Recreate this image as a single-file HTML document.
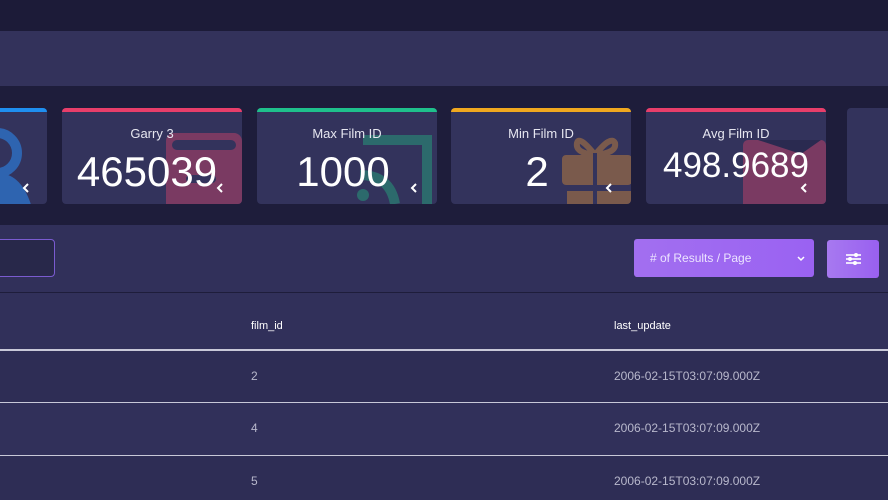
<!DOCTYPE html>
<html><head><style>
*{margin:0;padding:0;box-sizing:border-box}
body{width:888px;height:500px;overflow:hidden;background:#31305a;font-family:"Liberation Sans",sans-serif;position:relative;color:#fff}
.abs{position:absolute}
.card{position:absolute;top:108px;width:180px;height:96px;background:#33335c;border-radius:4px;overflow:hidden}
.card .bar{position:absolute;left:0;top:0;right:0;height:4px}
.card .t{position:absolute;left:0;right:0;top:18px;text-align:center;font-size:13px;color:#e6e6f0}
.card .v{position:absolute;left:0;right:0;top:40px;text-align:center;font-size:42px;color:#fff}
.card svg.ch{position:absolute;top:74px}
.cell{position:absolute;font-size:12px;color:#b8b8cc}
</style></head><body>
<div class="abs" style="left:0;top:0;width:888px;height:31px;background:#1c1b38"></div>
<div class="abs" style="left:0;top:31px;width:888px;height:55px;background:#33325b"></div>
<div class="abs" style="left:0;top:86px;width:888px;height:139px;background:#1e1d3b"></div>

<div class="card" style="left:-133px"><div class="bar" style="background:#1f8ff0"></div>
<svg class="abs" style="left:100px;top:20px" width="80" height="80"><circle cx="30" cy="25" r="20" fill="none" stroke="#2e64b0" stroke-width="10"/><path d="M0 80 Q10 45 30 45 Q55 45 65 80Z" fill="#2e64b0"/></svg>
<svg class="ch" style="left:155px" width="8" height="12"><path d="M6 2 L2 6 L6 10" fill="none" stroke="#fff" stroke-width="2"/></svg></div>

<div class="card" style="left:62px"><div class="bar" style="background:#e83e6a"></div>
<svg class="abs" style="left:104px;top:25px" width="76" height="71"><rect x="0" y="0" width="76" height="80" rx="8" fill="#7a3a62"/><rect x="6" y="7" width="64" height="10" rx="5" fill="#33335c"/><rect x="20" y="42" width="30" height="8" rx="4" fill="#33335c"/></svg>
<div class="t">Garry 3</div><div class="v" style="left:-10px">465039</div>
<svg class="ch" style="left:154px" width="8" height="12"><path d="M6 2 L2 6 L6 10" fill="none" stroke="#fff" stroke-width="2"/></svg></div>

<div class="card" style="left:257px"><div class="bar" style="background:#1fc08c"></div>
<svg class="abs" style="left:98px;top:27px" width="82" height="69"><path d="M8 5 H72 V69" fill="none" stroke="#2c6a6c" stroke-width="10"/><path d="M5 40 Q35 40 40 69" fill="none" stroke="#2c6a6c" stroke-width="10"/><circle cx="8" cy="60" r="6" fill="#2c6a6c"/></svg>
<div class="t">Max Film ID</div><div class="v" style="left:-8px">1000</div>
<svg class="ch" style="left:153px" width="8" height="12"><path d="M6 2 L2 6 L6 10" fill="none" stroke="#fff" stroke-width="2"/></svg></div>

<div class="card" style="left:451px"><div class="bar" style="background:#f0a81f"></div>
<svg class="abs" style="left:108px;top:27px" width="72" height="69"><rect x="3" y="20" width="70" height="30" rx="4" fill="#7a5a4c"/><rect x="8" y="56" width="66" height="20" fill="#7a5a4c"/><path d="M36 20 Q20 0 18 8 Q16 18 36 20 Q52 0 56 8 Q58 18 36 20" fill="none" stroke="#7a5a4c" stroke-width="6"/><rect x="34" y="18" width="4" height="60" fill="#33335c"/></svg>
<div class="t">Min Film ID</div><div class="v" style="left:-8px">2</div>
<svg class="ch" style="left:154px" width="8" height="12"><path d="M6 2 L2 6 L6 10" fill="none" stroke="#fff" stroke-width="2"/></svg></div>

<div class="card" style="left:646px"><div class="bar" style="background:#e83e6a"></div>
<svg class="abs" style="left:97px;top:32px" width="83" height="64"><rect x="0" y="0" width="83" height="70" rx="5" fill="#7a3a62"/><path d="M15 0 L78 0 L58 14 Z" fill="#2a2a50"/></svg>
<div class="t">Avg Film ID</div><div class="v" style="top:38px;font-size:35px">498.9689</div>
<svg class="ch" style="left:154px" width="8" height="12"><path d="M6 2 L2 6 L6 10" fill="none" stroke="#fff" stroke-width="2"/></svg></div>

<div class="card" style="left:847px"></div>

<div class="abs" style="left:-10px;top:239px;width:65px;height:38px;background:#28284a;border:1px solid #7a5bd0;border-radius:4px"></div>
<div class="abs" style="left:634px;top:239px;width:180px;height:38px;background:linear-gradient(90deg,#a26ff0,#9a62f2);border-radius:3px;font-size:12px;color:#ece4ff;padding:12px 16px">
# of Results / Page<svg class="abs" style="right:9px;top:17px" width="8" height="6"><path d="M1 1 L4 4 L7 1" fill="none" stroke="#fff" stroke-width="1.5"/></svg></div>
<div class="abs" style="left:827px;top:240px;width:52px;height:38px;background:linear-gradient(90deg,#a779f0,#9960f0);border-radius:3px">
<svg class="abs" style="left:19px;top:12px" width="15" height="14"><g stroke="#fff" stroke-width="1.6"><line x1="0" y1="3" x2="15" y2="3"/><line x1="0" y1="7" x2="15" y2="7"/><line x1="0" y1="11" x2="15" y2="11"/></g><g fill="#fff"><circle cx="10" cy="3" r="2"/><circle cx="4" cy="7" r="2"/><circle cx="9" cy="11" r="2"/></g></svg></div>

<div class="abs" style="left:0;top:292px;width:888px;height:1px;background:#1e1d3b"></div>
<div class="cell" style="left:251px;top:320px;color:#fff;font-size:11px">film_id</div>
<div class="cell" style="left:614px;top:320px;color:#fff;font-size:11px">last_update</div>
<div class="abs" style="left:0;top:349px;width:888px;height:2px;background:#c8c8d8"></div>
<div class="abs" style="left:0;top:351px;width:888px;height:51px;background:#2e2d55"></div>
<div class="cell" style="left:251px;top:369px">2</div><div class="cell" style="left:614px;top:369px">2006-02-15T03:07:09.000Z</div>
<div class="abs" style="left:0;top:402px;width:888px;height:1px;background:#c8c8d8"></div>
<div class="cell" style="left:251px;top:421px">4</div><div class="cell" style="left:614px;top:421px">2006-02-15T03:07:09.000Z</div>
<div class="abs" style="left:0;top:455px;width:888px;height:1px;background:#c8c8d8"></div>
<div class="abs" style="left:0;top:456px;width:888px;height:44px;background:#2e2d55"></div>
<div class="cell" style="left:251px;top:474px">5</div><div class="cell" style="left:614px;top:474px">2006-02-15T03:07:09.000Z</div>
</body></html>
